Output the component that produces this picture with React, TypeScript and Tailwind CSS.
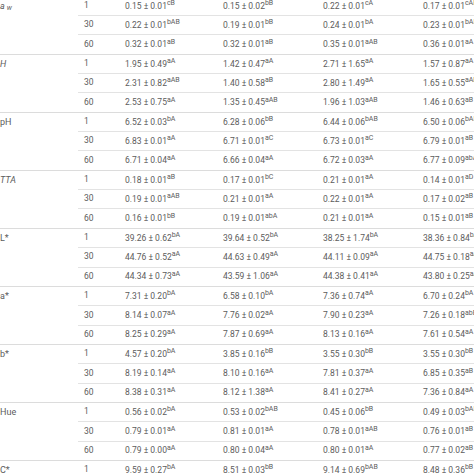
import React from "react";

type Row = { day: string; cells: [string, string][] };
type Group = { label: React.ReactNode; rows: Row[] };

const r = (day: string, ...vals: string[]): Row => ({
  day,
  cells: vals.map((v) => {
    const [num, sup] = v.split("|");
    return [num, sup] as [string, string];
  }),
});

const groups: Group[] = [
  {
    label: (
      <span className="italic">
        a<sub className="ml-[2px] text-[7px]">w</sub>
      </span>
    ),
    rows: [
      r("1", "0.15 ± 0.01|cB", "0.15 ± 0.02|bB", "0.22 ± 0.01|cA", "0.17 ± 0.01|cAB"),
      r("30", "0.22 ± 0.01|bAB", "0.19 ± 0.01|bB", "0.24 ± 0.01|bA", "0.23 ± 0.01|bAB"),
      r("60", "0.32 ± 0.01|aB", "0.32 ± 0.01|aB", "0.35 ± 0.01|aAB", "0.36 ± 0.01|aA"),
    ],
  },
  {
    label: <span className="italic">H</span>,
    rows: [
      r("1", "1.95 ± 0.49|aA", "1.42 ± 0.47|aA", "2.71 ± 1.65|aA", "1.57 ± 0.87|aA"),
      r("30", "2.31 ± 0.82|aAB", "1.40 ± 0.58|aB", "2.80 ± 1.49|aA", "1.65 ± 0.55|aAB"),
      r("60", "2.53 ± 0.75|aA", "1.35 ± 0.45|aAB", "1.96 ± 1.03|aAB", "1.46 ± 0.63|aB"),
    ],
  },
  {
    label: "pH",
    rows: [
      r("1", "6.52 ± 0.03|bA", "6.28 ± 0.06|bB", "6.44 ± 0.06|bAB", "6.50 ± 0.06|bAB"),
      r("30", "6.83 ± 0.01|aA", "6.71 ± 0.01|aC", "6.73 ± 0.01|aC", "6.79 ± 0.01|aB"),
      r("60", "6.71 ± 0.04|aA", "6.66 ± 0.04|aA", "6.72 ± 0.03|aA", "6.77 ± 0.09|abA"),
    ],
  },
  {
    label: <span className="italic">TTA</span>,
    rows: [
      r("1", "0.18 ± 0.01|aB", "0.17 ± 0.01|bC", "0.21 ± 0.01|aA", "0.14 ± 0.01|aD"),
      r("30", "0.19 ± 0.01|aAB", "0.21 ± 0.01|aA", "0.22 ± 0.01|aA", "0.17 ± 0.02|aB"),
      r("60", "0.16 ± 0.01|bB", "0.19 ± 0.01|abA", "0.21 ± 0.01|aA", "0.15 ± 0.01|aB"),
    ],
  },
  {
    label: "L*",
    rows: [
      r("1", "39.26 ± 0.62|bA", "39.64 ± 0.52|bA", "38.25 ± 1.74|bA", "38.36 ± 0.84|bA"),
      r("30", "44.76 ± 0.52|aA", "44.63 ± 0.49|aA", "44.11 ± 0.09|aA", "44.75 ± 0.18|aA"),
      r("60", "44.34 ± 0.73|aA", "43.59 ± 1.06|aA", "44.38 ± 0.41|aA", "43.80 ± 0.25|aA"),
    ],
  },
  {
    label: "a*",
    rows: [
      r("1", "7.31 ± 0.20|bA", "6.58 ± 0.10|bA", "7.36 ± 0.74|aA", "6.70 ± 0.24|bA"),
      r("30", "8.14 ± 0.07|aA", "7.76 ± 0.02|aA", "7.90 ± 0.23|aA", "7.26 ± 0.18|abB"),
      r("60", "8.25 ± 0.29|aA", "7.87 ± 0.69|aA", "8.13 ± 0.16|aA", "7.61 ± 0.54|aA"),
    ],
  },
  {
    label: "b*",
    rows: [
      r("1", "4.57 ± 0.20|bA", "3.85 ± 0.16|bB", "3.55 ± 0.30|bB", "3.55 ± 0.30|bB"),
      r("30", "8.19 ± 0.14|aA", "8.10 ± 0.16|aA", "7.81 ± 0.37|aA", "6.85 ± 0.35|aB"),
      r("60", "8.38 ± 0.31|aA", "8.12 ± 1.38|aA", "8.41 ± 0.27|aA", "7.36 ± 0.84|aA"),
    ],
  },
  {
    label: "Hue",
    rows: [
      r("1", "0.56 ± 0.02|bA", "0.53 ± 0.02|bAB", "0.45 ± 0.06|bB", "0.49 ± 0.03|bAB"),
      r("30", "0.79 ± 0.01|aA", "0.81 ± 0.01|aA", "0.78 ± 0.01|aAB", "0.76 ± 0.01|aB"),
      r("60", "0.79 ± 0.00|aA", "0.80 ± 0.04|aA", "0.80 ± 0.01|aA", "0.77 ± 0.02|aB"),
    ],
  },
  {
    label: "C*",
    rows: [r("1", "9.59 ± 0.27|bA", "8.51 ± 0.03|bB", "9.14 ± 0.69|bAB", "8.48 ± 0.36|bB")],
  },
];

const colWidths = ["w-[98px]", "w-[100px]", "w-[100px]", "w-[100px]"];

function Cell({ num, sup, width }: { num: string; sup: string; width: string }) {
  return (
    <div className={`${width} shrink-0 whitespace-nowrap`}>
      {num}
      <sup className="text-[7px]">{sup}</sup>
    </div>
  );
}

export default function App() {
  return (
    <div className="w-[474px] h-[474px] overflow-hidden bg-white text-[#5c5c5c] font-['Roboto',sans-serif] text-[8.5px]">
      <div className="mt-[-3.3px]">
        {groups.map((g, gi) => (
          <div key={gi} className="flex border-b border-[#dcdcdc]">
            <div className="w-[78px] shrink-0 h-[19.35px] flex items-center text-[9px]">
              {g.label}
            </div>
            <div className="flex-1">
              {g.rows.map((row, ri) => {
                const last = ri === g.rows.length - 1;
                return (
                  <div
                    key={ri}
                    className={
                      last
                        ? "flex items-center h-[18.35px]"
                        : "flex items-center h-[19.35px] border-b border-[#e3e3e3]"
                    }
                  >
                    <div className="w-[47px] shrink-0 pl-[6px] -mt-[1px]">{row.day}</div>
                    {row.cells.map(([num, sup], ci) => (
                      <Cell key={ci} num={num} sup={sup} width={colWidths[ci]} />
                    ))}
                  </div>
                );
              })}
            </div>
          </div>
        ))}
      </div>
    </div>
  );
}
